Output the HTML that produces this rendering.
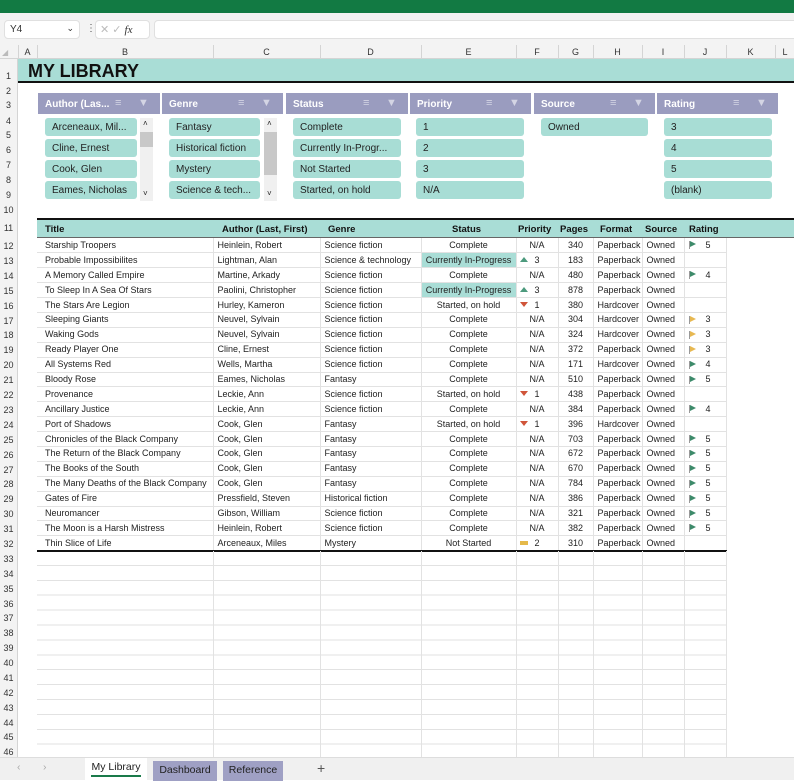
<!DOCTYPE html>
<html><head><meta charset="utf-8"><style>
*{margin:0;padding:0;box-sizing:border-box}
body{width:794px;height:780px;overflow:hidden;background:#fff;font-family:"Liberation Sans",Arial,sans-serif;position:relative;color:#222}
.a{position:absolute}
.green{left:0;top:0;width:794px;height:13px;background:#127a43}
.fbar{left:0;top:13px;width:794px;height:32px;background:#f3f3f3}
.box{background:#fff;border:1px solid #e0e0e0;border-radius:4px;top:20px;height:19px}
.colh{left:0;top:45px;width:794px;height:14px;background:#f3f3f3;border-bottom:1px solid #d4d4d4;font-size:9px;color:#333}
.colh span{position:absolute;top:2px;text-align:center}
.colh b{position:absolute;top:0;width:1px;height:14px;background:#d4d4d4}
.rowh{left:0;top:59px;width:18px;height:700px;background:#f3f3f3;border-right:1px solid #d4d4d4;font-size:9px;color:#333}
.rowh span{position:absolute;left:0;width:17px;text-align:center}
.title{left:18px;top:59px;width:776px;height:24px;background:#a9ddd6;border-bottom:2px solid #111}
.title div{position:absolute;left:10px;top:2px;font-size:18px;font-weight:bold;color:#111}
.sh{top:93px;height:21px;background:#9a9cbf;color:#fff;font-size:10px;font-weight:bold;padding:6px 0 0 7px}
.sh i{position:absolute;top:4px;font-style:normal;color:#d4d5e4;font-size:11px}
.btn{height:18px;background:#a8ddd5;border-radius:3px;font-size:10px;padding:4px 0 0 7px;color:#222;white-space:nowrap;overflow:hidden}
.sc{width:13px;height:83px;background:#f0f0f0}
.hdr{left:37px;top:218px;width:757px;height:20px;background:#a9ddd6;border-top:2px solid #111;border-bottom:1px solid #666}
.hdr span{position:absolute;top:4px;font-size:9.5px;font-weight:bold;color:#111}
table{position:absolute;left:37px;top:238px;border-collapse:collapse;table-layout:fixed;font-size:9px}
td{height:14.9px;border-bottom:1px solid #e2e2e2;border-right:1px solid #e2e2e2;padding:0 0 0 8px;white-space:nowrap;overflow:hidden;position:relative;line-height:13px}
td.c{text-align:center;padding:0}
td.h{background:#a9ddd6}
td.l{padding-left:4px}
.up,.dn,.ds,.fg,.fy{position:absolute;left:3px;top:4px;width:0;height:0}
.up{border-left:4px solid transparent;border-right:4px solid transparent;border-bottom:5px solid #4c9a7d}
.dn{border-left:4px solid transparent;border-right:4px solid transparent;border-top:5px solid #d0553a}
.ds{width:8px;height:4px;background:#e5b94a;top:5px}
.fg,.fy{left:4px;top:3px;width:1px;height:8px;background:#999}
.fg:after,.fy:after{content:"";position:absolute;left:1px;top:0;border-top:3px solid transparent;border-bottom:3px solid transparent;border-left:6px solid #3d8a6a}
.fy:after{border-left-color:#e7b851}
.grid{left:37px;top:551px;width:689px;height:206px;background:repeating-linear-gradient(to bottom,transparent 0,transparent 13.9px,#e2e2e2 13.9px,#e2e2e2 14.9px)}
.vl{position:absolute;top:551px;width:1px;height:206px;background:#e2e2e2}
.tabs{left:0;top:757px;width:794px;height:23px;background:#f0f0f0;border-top:1px solid #ddd;font-size:10.5px}
.tab{position:absolute;top:3px;height:20px;padding-top:3px;text-align:center;color:#222}
</style></head><body>
<div class="a green"></div>
<div class="a fbar"></div>
<div class="a box" style="left:4px;width:76px;font-size:10px;padding:3px 0 0 5px;color:#333">Y4<span style="position:absolute;right:5px;top:2px;font-size:9px">&#8964;</span></div>
<div class="a" style="left:86px;top:23px;font-size:10px;color:#555">&#8942;</div>
<div class="a box" style="left:95px;width:55px;font-size:11px;padding:2px 0 0 4px;color:#bbb">&#10005; &#10003; <i style="color:#333;font-family:'Liberation Serif',serif">fx</i></div>
<div class="a box" style="left:154px;width:645px"></div>
<div class="a colh">
<span style="left:2px;top:3px;color:#bbb;font-size:8px">&#9698;</span>
<b style="left:18px"></b><span style="left:18px;width:19px">A</span><b style="left:37px"></b>
<span style="left:37px;width:176px">B</span><b style="left:213px"></b>
<span style="left:213px;width:107px">C</span><b style="left:320px"></b>
<span style="left:320px;width:101px">D</span><b style="left:421px"></b>
<span style="left:421px;width:95px">E</span><b style="left:516px"></b>
<span style="left:516px;width:42px">F</span><b style="left:558px"></b>
<span style="left:558px;width:35px">G</span><b style="left:593px"></b>
<span style="left:593px;width:49px">H</span><b style="left:642px"></b>
<span style="left:642px;width:42px">I</span><b style="left:684px"></b>
<span style="left:684px;width:42px">J</span><b style="left:726px"></b>
<span style="left:726px;width:49px">K</span><b style="left:775px"></b>
<span style="left:775px;width:20px">L</span>
</div>
<div class="a rowh">
<span style="top:12px">1</span><span style="top:27px">2</span><span style="top:41px">3</span><span style="top:57px">4</span><span style="top:71px">5</span><span style="top:86px">6</span><span style="top:101px">7</span><span style="top:116px">8</span><span style="top:131px">9</span><span style="top:146px">10</span><span style="top:164px">11</span>
<span style="top:182px">12</span><span style="top:197px">13</span><span style="top:212px">14</span><span style="top:227px">15</span><span style="top:242px">16</span><span style="top:257px">17</span><span style="top:271px">18</span><span style="top:286px">19</span><span style="top:301px">20</span><span style="top:316px">21</span><span style="top:331px">22</span><span style="top:346px">23</span><span style="top:361px">24</span><span style="top:376px">25</span><span style="top:391px">26</span><span style="top:406px">27</span><span style="top:420px">28</span><span style="top:435px">29</span><span style="top:450px">30</span><span style="top:465px">31</span><span style="top:480px">32</span><span style="top:495px">33</span><span style="top:510px">34</span><span style="top:525px">35</span><span style="top:540px">36</span><span style="top:554px">37</span><span style="top:569px">38</span><span style="top:584px">39</span><span style="top:599px">40</span><span style="top:614px">41</span><span style="top:629px">42</span><span style="top:644px">43</span><span style="top:659px">44</span><span style="top:673px">45</span><span style="top:688px">46</span>
</div>
<div class="a title"><div>MY LIBRARY</div></div>

<div class="a sh" style="left:38px;width:122px">Author (Las...<i style="left:77px">&#8801;</i><i style="left:100px">&#9660;</i></div>
<div class="a sh" style="left:162px;width:121px">Genre<i style="left:76px">&#8801;</i><i style="left:99px">&#9660;</i></div>
<div class="a sh" style="left:286px;width:122px">Status<i style="left:77px">&#8801;</i><i style="left:100px">&#9660;</i></div>
<div class="a sh" style="left:410px;width:121px">Priority<i style="left:76px">&#8801;</i><i style="left:99px">&#9660;</i></div>
<div class="a sh" style="left:534px;width:121px">Source<i style="left:76px">&#8801;</i><i style="left:99px">&#9660;</i></div>
<div class="a sh" style="left:657px;width:121px">Rating<i style="left:76px">&#8801;</i><i style="left:99px">&#9660;</i></div>

<div class="a btn" style="left:45px;top:118px;width:92px">Arceneaux, Mil...</div>
<div class="a btn" style="left:45px;top:139px;width:92px">Cline, Ernest</div>
<div class="a btn" style="left:45px;top:160px;width:92px">Cook, Glen</div>
<div class="a btn" style="left:45px;top:181px;width:92px">Eames, Nicholas</div>
<div class="a sc" style="left:140px;top:118px"><div class="a" style="left:0;top:14px;width:13px;height:15px;background:#c8c8c8"></div><div class="a" style="left:3px;top:1px;font-size:8px">&#708;</div><div class="a" style="left:3px;top:71px;font-size:8px">&#709;</div></div>
<div class="a btn" style="left:169px;top:118px;width:91px">Fantasy</div>
<div class="a btn" style="left:169px;top:139px;width:91px">Historical fiction</div>
<div class="a btn" style="left:169px;top:160px;width:91px">Mystery</div>
<div class="a btn" style="left:169px;top:181px;width:91px">Science &amp; tech...</div>
<div class="a sc" style="left:264px;top:118px"><div class="a" style="left:0;top:14px;width:13px;height:43px;background:#c8c8c8"></div><div class="a" style="left:3px;top:1px;font-size:8px">&#708;</div><div class="a" style="left:3px;top:71px;font-size:8px">&#709;</div></div>
<div class="a btn" style="left:293px;top:118px;width:108px">Complete</div>
<div class="a btn" style="left:293px;top:139px;width:108px">Currently In-Progr...</div>
<div class="a btn" style="left:293px;top:160px;width:108px">Not Started</div>
<div class="a btn" style="left:293px;top:181px;width:108px">Started, on hold</div>
<div class="a btn" style="left:416px;top:118px;width:108px">1</div>
<div class="a btn" style="left:416px;top:139px;width:108px">2</div>
<div class="a btn" style="left:416px;top:160px;width:108px">3</div>
<div class="a btn" style="left:416px;top:181px;width:108px">N/A</div>
<div class="a btn" style="left:541px;top:118px;width:107px">Owned</div>
<div class="a btn" style="left:664px;top:118px;width:108px">3</div>
<div class="a btn" style="left:664px;top:139px;width:108px">4</div>
<div class="a btn" style="left:664px;top:160px;width:108px">5</div>
<div class="a btn" style="left:664px;top:181px;width:108px">(blank)</div>

<div class="a hdr">
<span style="left:8px">Title</span><span style="left:185px">Author (Last, First)</span><span style="left:291px">Genre</span><span style="left:415px">Status</span><span style="left:481px">Priority</span><span style="left:523px">Pages</span><span style="left:563px">Format</span><span style="left:608px">Source</span><span style="left:652px">Rating</span>
</div>

<table>
<colgroup><col style="width:176px"><col style="width:107px"><col style="width:101px"><col style="width:95px"><col style="width:42px"><col style="width:35px"><col style="width:49px"><col style="width:42px"><col style="width:42px"></colgroup>
<tr><td>Starship Troopers</td><td class="l">Heinlein, Robert</td><td class="l">Science fiction</td><td class="c">Complete</td><td class="c">N/A</td><td class="c">340</td><td class="l">Paperback</td><td class="l">Owned</td><td style="padding-left:21px"><i class="fg"></i>5</td></tr>
<tr><td>Probable Impossibilites</td><td class="l">Lightman, Alan</td><td class="l">Science &amp; technology</td><td class="c h">Currently In-Progress</td><td class="c"><i class="up"></i>3</td><td class="c">183</td><td class="l">Paperback</td><td class="l">Owned</td><td></td></tr>
<tr><td>A Memory Called Empire</td><td class="l">Martine, Arkady</td><td class="l">Science fiction</td><td class="c">Complete</td><td class="c">N/A</td><td class="c">480</td><td class="l">Paperback</td><td class="l">Owned</td><td style="padding-left:21px"><i class="fg"></i>4</td></tr>
<tr><td>To Sleep In A Sea Of Stars</td><td class="l">Paolini, Christopher</td><td class="l">Science fiction</td><td class="c h">Currently In-Progress</td><td class="c"><i class="up"></i>3</td><td class="c">878</td><td class="l">Paperback</td><td class="l">Owned</td><td></td></tr>
<tr><td>The Stars Are Legion</td><td class="l">Hurley, Kameron</td><td class="l">Science fiction</td><td class="c">Started, on hold</td><td class="c"><i class="dn"></i>1</td><td class="c">380</td><td class="l">Hardcover</td><td class="l">Owned</td><td></td></tr>
<tr><td>Sleeping Giants</td><td class="l">Neuvel, Sylvain</td><td class="l">Science fiction</td><td class="c">Complete</td><td class="c">N/A</td><td class="c">304</td><td class="l">Hardcover</td><td class="l">Owned</td><td style="padding-left:21px"><i class="fy"></i>3</td></tr>
<tr><td>Waking Gods</td><td class="l">Neuvel, Sylvain</td><td class="l">Science fiction</td><td class="c">Complete</td><td class="c">N/A</td><td class="c">324</td><td class="l">Hardcover</td><td class="l">Owned</td><td style="padding-left:21px"><i class="fy"></i>3</td></tr>
<tr><td>Ready Player One</td><td class="l">Cline, Ernest</td><td class="l">Science fiction</td><td class="c">Complete</td><td class="c">N/A</td><td class="c">372</td><td class="l">Paperback</td><td class="l">Owned</td><td style="padding-left:21px"><i class="fy"></i>3</td></tr>
<tr><td>All Systems Red</td><td class="l">Wells, Martha</td><td class="l">Science fiction</td><td class="c">Complete</td><td class="c">N/A</td><td class="c">171</td><td class="l">Hardcover</td><td class="l">Owned</td><td style="padding-left:21px"><i class="fg"></i>4</td></tr>
<tr><td>Bloody Rose</td><td class="l">Eames, Nicholas</td><td class="l">Fantasy</td><td class="c">Complete</td><td class="c">N/A</td><td class="c">510</td><td class="l">Paperback</td><td class="l">Owned</td><td style="padding-left:21px"><i class="fg"></i>5</td></tr>
<tr><td>Provenance</td><td class="l">Leckie, Ann</td><td class="l">Science fiction</td><td class="c">Started, on hold</td><td class="c"><i class="dn"></i>1</td><td class="c">438</td><td class="l">Paperback</td><td class="l">Owned</td><td></td></tr>
<tr><td>Ancillary Justice</td><td class="l">Leckie, Ann</td><td class="l">Science fiction</td><td class="c">Complete</td><td class="c">N/A</td><td class="c">384</td><td class="l">Paperback</td><td class="l">Owned</td><td style="padding-left:21px"><i class="fg"></i>4</td></tr>
<tr><td>Port of Shadows</td><td class="l">Cook, Glen</td><td class="l">Fantasy</td><td class="c">Started, on hold</td><td class="c"><i class="dn"></i>1</td><td class="c">396</td><td class="l">Hardcover</td><td class="l">Owned</td><td></td></tr>
<tr><td>Chronicles of the Black Company</td><td class="l">Cook, Glen</td><td class="l">Fantasy</td><td class="c">Complete</td><td class="c">N/A</td><td class="c">703</td><td class="l">Paperback</td><td class="l">Owned</td><td style="padding-left:21px"><i class="fg"></i>5</td></tr>
<tr><td>The Return of the Black Company</td><td class="l">Cook, Glen</td><td class="l">Fantasy</td><td class="c">Complete</td><td class="c">N/A</td><td class="c">672</td><td class="l">Paperback</td><td class="l">Owned</td><td style="padding-left:21px"><i class="fg"></i>5</td></tr>
<tr><td>The Books of the South</td><td class="l">Cook, Glen</td><td class="l">Fantasy</td><td class="c">Complete</td><td class="c">N/A</td><td class="c">670</td><td class="l">Paperback</td><td class="l">Owned</td><td style="padding-left:21px"><i class="fg"></i>5</td></tr>
<tr><td>The Many Deaths of the Black Company</td><td class="l">Cook, Glen</td><td class="l">Fantasy</td><td class="c">Complete</td><td class="c">N/A</td><td class="c">784</td><td class="l">Paperback</td><td class="l">Owned</td><td style="padding-left:21px"><i class="fg"></i>5</td></tr>
<tr><td>Gates of Fire</td><td class="l">Pressfield, Steven</td><td class="l">Historical fiction</td><td class="c">Complete</td><td class="c">N/A</td><td class="c">386</td><td class="l">Paperback</td><td class="l">Owned</td><td style="padding-left:21px"><i class="fg"></i>5</td></tr>
<tr><td>Neuromancer</td><td class="l">Gibson, William</td><td class="l">Science fiction</td><td class="c">Complete</td><td class="c">N/A</td><td class="c">321</td><td class="l">Paperback</td><td class="l">Owned</td><td style="padding-left:21px"><i class="fg"></i>5</td></tr>
<tr><td>The Moon is a Harsh Mistress</td><td class="l">Heinlein, Robert</td><td class="l">Science fiction</td><td class="c">Complete</td><td class="c">N/A</td><td class="c">382</td><td class="l">Paperback</td><td class="l">Owned</td><td style="padding-left:21px"><i class="fg"></i>5</td></tr>
<tr><td style="border-bottom:2px solid #111">Thin Slice of Life</td><td class="l" style="border-bottom:2px solid #111">Arceneaux, Miles</td><td class="l" style="border-bottom:2px solid #111">Mystery</td><td class="c" style="border-bottom:2px solid #111">Not Started</td><td class="c" style="border-bottom:2px solid #111"><i class="ds"></i>2</td><td class="c" style="border-bottom:2px solid #111">310</td><td class="l" style="border-bottom:2px solid #111">Paperback</td><td class="l" style="border-bottom:2px solid #111">Owned</td><td style="border-bottom:2px solid #111"></td></tr>
</table>

<div class="a grid"></div>
<div class="vl" style="left:213px"></div><div class="vl" style="left:320px"></div><div class="vl" style="left:421px"></div><div class="vl" style="left:516px"></div><div class="vl" style="left:558px"></div><div class="vl" style="left:593px"></div><div class="vl" style="left:642px"></div><div class="vl" style="left:684px"></div><div class="vl" style="left:726px"></div>

<div class="a tabs">
<span class="a" style="left:17px;top:3px;color:#aaa">&#8249;</span><span class="a" style="left:43px;top:3px;color:#aaa">&#8250;</span>
<div class="tab" style="left:85px;width:62px;background:#fff;top:0;height:22px;padding-top:3px">My Library<div style="position:absolute;left:6px;right:6px;top:17px;height:2px;background:#1a7a4a"></div></div>
<div class="tab" style="left:153px;width:64px;background:#9fa0c4">Dashboard</div>
<div class="tab" style="left:223px;width:60px;background:#9fa0c4">Reference</div>
<span class="a" style="left:317px;top:2px;font-size:14px;color:#555">+</span>
</div>
</body></html>
